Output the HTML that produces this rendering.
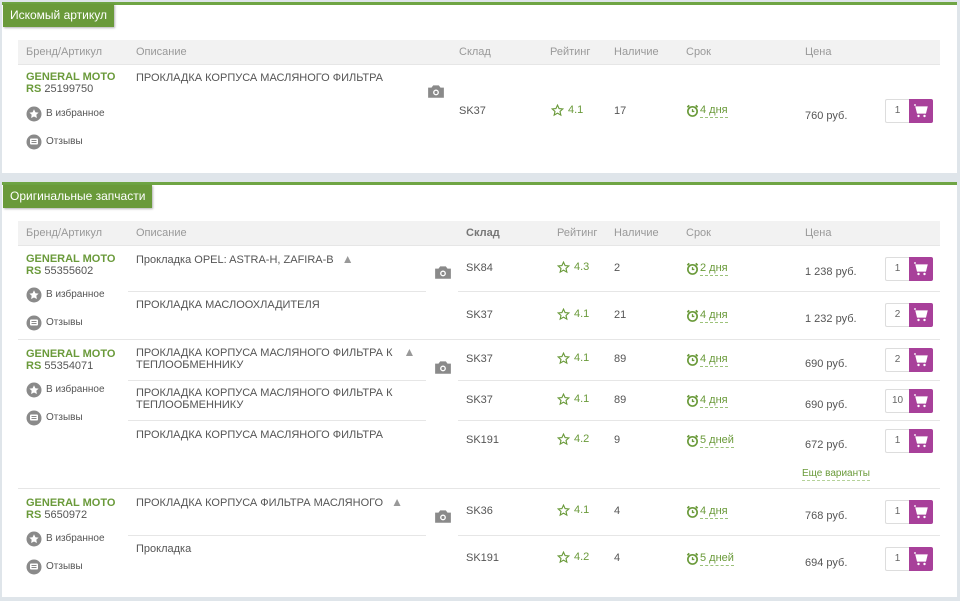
<!DOCTYPE html>
<html><head><meta charset="utf-8"><style>
*{margin:0;padding:0;box-sizing:border-box}
body{width:960px;height:601px;background:#dfe5ea;font-family:"Liberation Sans","DejaVu Sans",sans-serif;font-size:11px;color:#555;position:relative;overflow:hidden}
.p{position:absolute;background:#fff;border-top:3px solid #6fa544}
.a{position:absolute;white-space:nowrap;line-height:14px}
.badge{position:absolute;background:#6a9a3a;color:#fff;font-size:12px;line-height:23px;padding:0 7px;box-shadow:1px 1px 2px rgba(0,0,0,.3)}
.hd{position:absolute;left:18px;width:922px;height:24px;background:#f2f2f2}
.hd span{position:absolute;top:5px;color:#999;line-height:14px}
.br{color:#6a9a3a;font-weight:bold}
.hl{position:absolute;height:1px;background:#e6e6e6}
.g{color:#6a9a3a}
.dl{color:#6a9a3a;border-bottom:1px dashed #9cc27a;line-height:13px}
.q{position:absolute;width:24px;height:24px;border:1px solid #ddd;border-right:0;border-radius:2px 0 0 2px;text-align:center;line-height:22px;font-size:10px;color:#666}
.c{position:absolute;width:24px;height:24px;background:#a8409a;border-radius:0 2px 2px 0}
.tri{color:#999;font-size:12px;margin-left:5px}
</style></head><body>
<svg width="0" height="0" style="position:absolute"><defs>
<symbol id="cart" viewBox="0 0 24 24"><path d="M7 8h11l-1.5 6H8.5z M5 6h2" fill="#fff" stroke="#fff" stroke-width="1.2"/><circle cx="9.5" cy="17" r="1.2" fill="#fff"/><circle cx="15.5" cy="17" r="1.2" fill="#fff"/></symbol>
<symbol id="star" viewBox="0 0 14 14"><path d="M7 1.2l1.7 3.7 4 .4-3 2.7.9 4-3.6-2.1-3.6 2.1.9-4-3-2.7 4-.4z" fill="none" stroke="#6a9a3a" stroke-width="1.2"/></symbol>
<symbol id="clk" viewBox="0 0 14 14"><circle cx="7" cy="8" r="5" fill="none" stroke="#6a9a3a" stroke-width="1.8"/><path d="M7 5.5V8h2" fill="none" stroke="#6a9a3a" stroke-width="1.4"/><path d="M1.5 3.5l2-2M12.5 3.5l-2-2" stroke="#6a9a3a" stroke-width="1.8"/></symbol>
<symbol id="cam" viewBox="0 0 16 14"><path d="M1 4h3l1.5-2h5L12 4h3v9H1z" fill="#8a8a8a"/><circle cx="8" cy="8.3" r="2.6" fill="#fff"/><circle cx="8" cy="8.3" r="1.4" fill="#8a8a8a"/></symbol>
<symbol id="fav" viewBox="0 0 16 16"><circle cx="8" cy="8" r="7.5" fill="#8a8a8a"/><path d="M8 3.3l1.4 2.9 3.2.4-2.3 2.2.6 3.2L8 10.5l-2.9 1.5.6-3.2-2.3-2.2 3.2-.4z" fill="#fff"/></symbol>
<symbol id="rev" viewBox="0 0 16 16"><circle cx="8" cy="8" r="7.5" fill="#8a8a8a"/><rect x="4" y="4.5" width="8" height="6" rx="1" fill="#fff"/><path d="M5.5 6.5h5M5.5 8.5h5" stroke="#8a8a8a" stroke-width=".9"/></symbol>
</defs></svg>

<div class="p" style="left:2px;top:2px;width:955px;height:171px"></div>
<div class="badge" style="left:3px;top:4px">Искомый артикул</div>
<div class="hd" style="top:40px"><span style="left:8px">Бренд/Артикул</span><span style="left:118px">Описание</span><span style="left:441px">Склад</span><span style="left:532px">Рейтинг</span><span style="left:596px">Наличие</span><span style="left:668px">Срок</span><span style="left:787px">Цена</span></div>

<div class="p" style="left:2px;top:182px;width:955px;height:415px"></div>
<div class="badge" style="left:3px;top:185px">Оригинальные запчасти</div>
<div class="hd" style="top:221px"><span style="left:8px">Бренд/Артикул</span><span style="left:118px">Описание</span><span style="left:448px;color:#777;font-weight:bold">Склад</span><span style="left:539px">Рейтинг</span><span style="left:596px">Наличие</span><span style="left:668px">Срок</span><span style="left:787px">Цена</span></div>

<div class="hl" style="left:18px;top:64px;width:922px"></div>
<div class="hl" style="left:18px;top:245px;width:922px"></div>
<div class="hl" style="left:128px;top:291px;width:298px"></div><div class="hl" style="left:458px;top:291px;width:482px"></div>
<div class="hl" style="left:18px;top:339px;width:922px"></div>
<div class="hl" style="left:128px;top:380px;width:298px"></div><div class="hl" style="left:458px;top:380px;width:482px"></div>
<div class="hl" style="left:128px;top:420px;width:298px"></div><div class="hl" style="left:458px;top:420px;width:482px"></div>
<div class="hl" style="left:18px;top:488px;width:922px"></div>
<div class="hl" style="left:128px;top:535px;width:298px"></div><div class="hl" style="left:458px;top:535px;width:482px"></div>

<div class="a br" style="left:26px;top:71px;line-height:12px">GENERAL MOTO<br>RS <span style="font-weight:normal;color:#555">25199750</span></div>
<svg class="a" style="left:26px;top:106px" width="16" height="16"><use href="#fav"/></svg><div class="a" style="left:46px;top:107px;font-size:10px">В избранное</div>
<svg class="a" style="left:26px;top:134px" width="16" height="16"><use href="#rev"/></svg><div class="a" style="left:46px;top:135px;font-size:10px">Отзывы</div>

<div class="a br" style="left:26px;top:253px;line-height:12px">GENERAL MOTO<br>RS <span style="font-weight:normal;color:#555">55355602</span></div>
<svg class="a" style="left:26px;top:287px" width="16" height="16"><use href="#fav"/></svg><div class="a" style="left:46px;top:288px;font-size:10px">В избранное</div>
<svg class="a" style="left:26px;top:315px" width="16" height="16"><use href="#rev"/></svg><div class="a" style="left:46px;top:316px;font-size:10px">Отзывы</div>

<div class="a br" style="left:26px;top:348px;line-height:12px">GENERAL MOTO<br>RS <span style="font-weight:normal;color:#555">55354071</span></div>
<svg class="a" style="left:26px;top:382px" width="16" height="16"><use href="#fav"/></svg><div class="a" style="left:46px;top:383px;font-size:10px">В избранное</div>
<svg class="a" style="left:26px;top:410px" width="16" height="16"><use href="#rev"/></svg><div class="a" style="left:46px;top:411px;font-size:10px">Отзывы</div>

<div class="a br" style="left:26px;top:497px;line-height:12px">GENERAL MOTO<br>RS <span style="font-weight:normal;color:#555">5650972</span></div>
<svg class="a" style="left:26px;top:531px" width="16" height="16"><use href="#fav"/></svg><div class="a" style="left:46px;top:532px;font-size:10px">В избранное</div>
<svg class="a" style="left:26px;top:559px" width="16" height="16"><use href="#rev"/></svg><div class="a" style="left:46px;top:560px;font-size:10px">Отзывы</div>

<div class="a" style="left:136px;top:71px">ПРОКЛАДКА КОРПУСА МАСЛЯНОГО ФИЛЬТРА</div>
<div class="a" style="left:136px;top:252px">Прокладка OPEL: ASTRA-H, ZAFIRA-B <span class="tri">▲</span></div>
<div class="a" style="left:136px;top:298px">ПРОКЛАДКА МАСЛООХЛАДИТЕЛЯ</div>
<div class="a" style="left:136px;top:346px;line-height:12px">ПРОКЛАДКА КОРПУСА МАСЛЯНОГО ФИЛЬТРА К <span class="tri" style="margin-left:8px">▲</span><br>ТЕПЛООБМЕННИКУ</div>
<div class="a" style="left:136px;top:387px;line-height:12px">ПРОКЛАДКА КОРПУСА МАСЛЯНОГО ФИЛЬТРА К<br>ТЕПЛООБМЕННИКУ</div>
<div class="a" style="left:136px;top:428px">ПРОКЛАДКА КОРПУСА МАСЛЯНОГО ФИЛЬТРА</div>
<div class="a" style="left:136px;top:495px">ПРОКЛАДКА КОРПУСА ФИЛЬТРА МАСЛЯНОГО <span class="tri">▲</span></div>
<div class="a" style="left:136px;top:542px">Прокладка</div>

<svg class="a" style="left:427px;top:83px" width="18" height="16"><use href="#cam"/></svg>
<svg class="a" style="left:434px;top:264px" width="18" height="16"><use href="#cam"/></svg>
<svg class="a" style="left:434px;top:359px" width="18" height="16"><use href="#cam"/></svg>
<svg class="a" style="left:434px;top:508px" width="18" height="16"><use href="#cam"/></svg>

<div class="a" style="left:459px;top:104px">SK37</div>
<svg class="a" style="left:551px;top:104px" width="13" height="13"><use href="#star"/></svg><div class="a g" style="left:568px;top:103px">4.1</div>
<div class="a" style="left:614px;top:104px">17</div>
<svg class="a" style="left:686px;top:104px" width="13" height="13"><use href="#clk"/></svg><div class="a dl" style="left:700px;top:104px">4 дня</div>
<div class="a" style="left:805px;top:109px">760 руб.</div>
<div class="q" style="left:885px;top:99px">1</div><svg class="c" style="left:909px;top:99px" width="24" height="24"><use href="#cart"/></svg>

<div class="a" style="left:466px;top:261px">SK84</div>
<svg class="a" style="left:557px;top:261px" width="13" height="13"><use href="#star"/></svg><div class="a g" style="left:574px;top:260px">4.3</div>
<div class="a" style="left:614px;top:261px">2</div>
<svg class="a" style="left:686px;top:262px" width="13" height="13"><use href="#clk"/></svg><div class="a dl" style="left:700px;top:262px">2 дня</div>
<div class="a" style="left:805px;top:265px">1 238 руб.</div>
<div class="q" style="left:885px;top:257px">1</div><svg class="c" style="left:909px;top:257px" width="24" height="24"><use href="#cart"/></svg>

<div class="a" style="left:466px;top:308px">SK37</div>
<svg class="a" style="left:557px;top:308px" width="13" height="13"><use href="#star"/></svg><div class="a g" style="left:574px;top:307px">4.1</div>
<div class="a" style="left:614px;top:308px">21</div>
<svg class="a" style="left:686px;top:309px" width="13" height="13"><use href="#clk"/></svg><div class="a dl" style="left:700px;top:309px">4 дня</div>
<div class="a" style="left:805px;top:312px">1 232 руб.</div>
<div class="q" style="left:885px;top:303px">2</div><svg class="c" style="left:909px;top:303px" width="24" height="24"><use href="#cart"/></svg>

<div class="a" style="left:466px;top:352px">SK37</div>
<svg class="a" style="left:557px;top:352px" width="13" height="13"><use href="#star"/></svg><div class="a g" style="left:574px;top:351px">4.1</div>
<div class="a" style="left:614px;top:352px">89</div>
<svg class="a" style="left:686px;top:353px" width="13" height="13"><use href="#clk"/></svg><div class="a dl" style="left:700px;top:353px">4 дня</div>
<div class="a" style="left:805px;top:357px">690 руб.</div>
<div class="q" style="left:885px;top:348px">2</div><svg class="c" style="left:909px;top:348px" width="24" height="24"><use href="#cart"/></svg>

<div class="a" style="left:466px;top:393px">SK37</div>
<svg class="a" style="left:557px;top:393px" width="13" height="13"><use href="#star"/></svg><div class="a g" style="left:574px;top:392px">4.1</div>
<div class="a" style="left:614px;top:393px">89</div>
<svg class="a" style="left:686px;top:394px" width="13" height="13"><use href="#clk"/></svg><div class="a dl" style="left:700px;top:394px">4 дня</div>
<div class="a" style="left:805px;top:398px">690 руб.</div>
<div class="q" style="left:885px;top:389px">10</div><svg class="c" style="left:909px;top:389px" width="24" height="24"><use href="#cart"/></svg>

<div class="a" style="left:466px;top:433px">SK191</div>
<svg class="a" style="left:557px;top:433px" width="13" height="13"><use href="#star"/></svg><div class="a g" style="left:574px;top:432px">4.2</div>
<div class="a" style="left:614px;top:433px">9</div>
<svg class="a" style="left:686px;top:434px" width="13" height="13"><use href="#clk"/></svg><div class="a dl" style="left:700px;top:434px">5 дней</div>
<div class="a" style="left:805px;top:438px">672 руб.</div>
<div class="q" style="left:885px;top:429px">1</div><svg class="c" style="left:909px;top:429px" width="24" height="24"><use href="#cart"/></svg>
<div class="a g" style="left:802px;top:468px;font-size:10px;border-bottom:1px dashed #b5d29a;line-height:12px">Еще варианты</div>

<div class="a" style="left:466px;top:504px">SK36</div>
<svg class="a" style="left:557px;top:504px" width="13" height="13"><use href="#star"/></svg><div class="a g" style="left:574px;top:503px">4.1</div>
<div class="a" style="left:614px;top:504px">4</div>
<svg class="a" style="left:686px;top:505px" width="13" height="13"><use href="#clk"/></svg><div class="a dl" style="left:700px;top:505px">4 дня</div>
<div class="a" style="left:805px;top:509px">768 руб.</div>
<div class="q" style="left:885px;top:500px">1</div><svg class="c" style="left:909px;top:500px" width="24" height="24"><use href="#cart"/></svg>

<div class="a" style="left:466px;top:551px">SK191</div>
<svg class="a" style="left:557px;top:551px" width="13" height="13"><use href="#star"/></svg><div class="a g" style="left:574px;top:550px">4.2</div>
<div class="a" style="left:614px;top:551px">4</div>
<svg class="a" style="left:686px;top:552px" width="13" height="13"><use href="#clk"/></svg><div class="a dl" style="left:700px;top:552px">5 дней</div>
<div class="a" style="left:805px;top:556px">694 руб.</div>
<div class="q" style="left:885px;top:547px">1</div><svg class="c" style="left:909px;top:547px" width="24" height="24"><use href="#cart"/></svg>
</body></html>
